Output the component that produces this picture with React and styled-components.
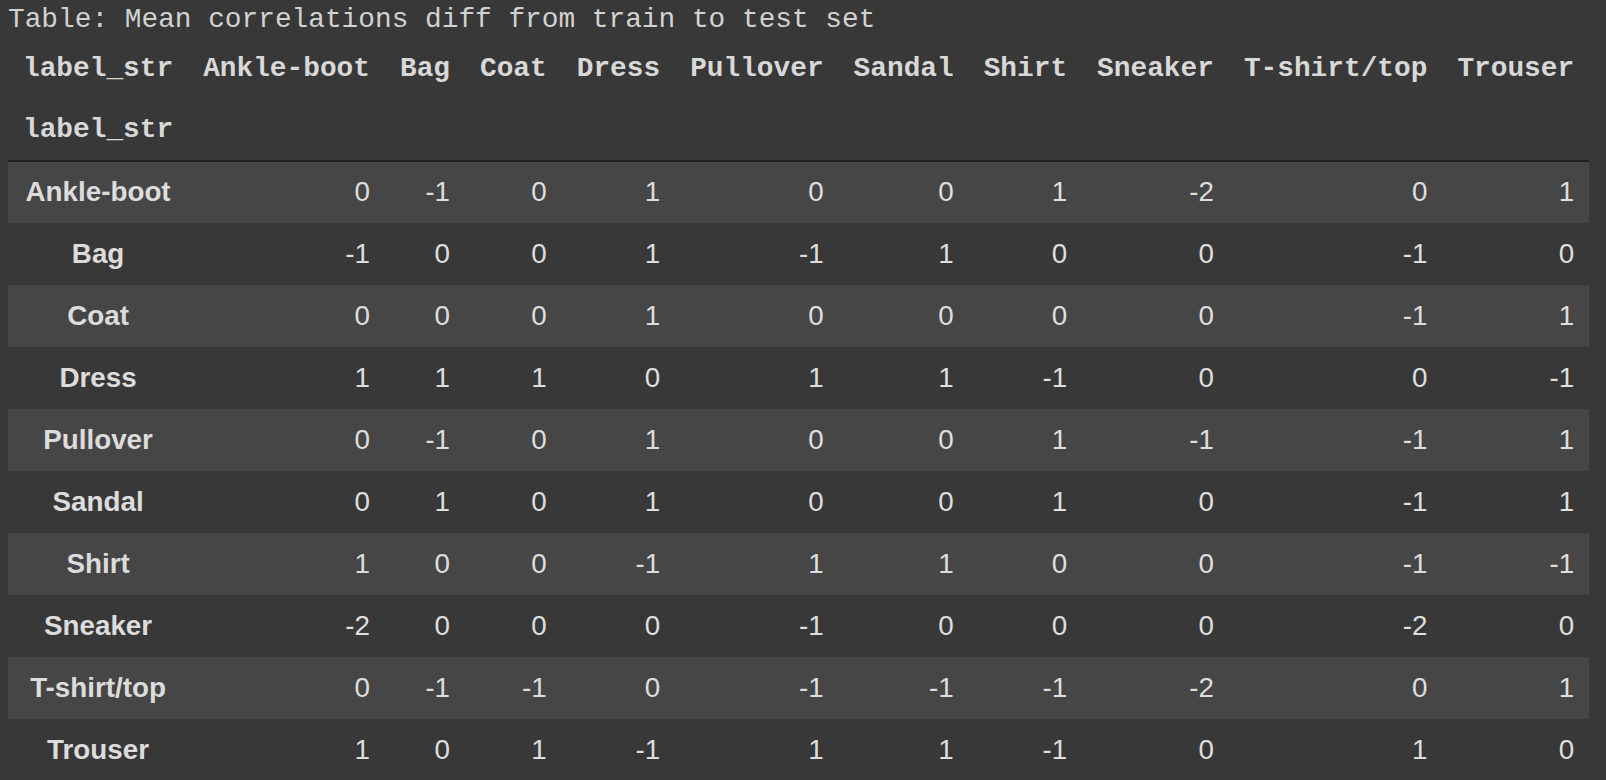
import * as React from 'react';
import styled, {createGlobalStyle} from 'styled-components';

const columns = ['Ankle-boot', 'Bag', 'Coat', 'Dress', 'Pullover', 'Sandal', 'Shirt', 'Sneaker', 'T-shirt/top', 'Trouser'];

const rows = [
    ['Ankle-boot', [0, -1, 0, 1, 0, 0, 1, -2, 0, 1]],
    ['Bag', [-1, 0, 0, 1, -1, 1, 0, 0, -1, 0]],
    ['Coat', [0, 0, 0, 1, 0, 0, 0, 0, -1, 1]],
    ['Dress', [1, 1, 1, 0, 1, 1, -1, 0, 0, -1]],
    ['Pullover', [0, -1, 0, 1, 0, 0, 1, -1, -1, 1]],
    ['Sandal', [0, 1, 0, 1, 0, 0, 1, 0, -1, 1]],
    ['Shirt', [1, 0, 0, -1, 1, 1, 0, 0, -1, -1]],
    ['Sneaker', [-2, 0, 0, 0, -1, 0, 0, 0, -2, 0]],
    ['T-shirt/top', [0, -1, -1, 0, -1, -1, -1, -2, 0, 1]],
    ['Trouser', [1, 0, 1, -1, 1, 1, -1, 0, 1, 0]]
];

export default function App() {
    return (
        <>
            <GlobalStyle/>
            <Page>
                <Caption>Table: Mean correlations diff from train to test set</Caption>
                <Frame>
                    <thead>
                        <HeadRow>
                            <HeadCell>label_str</HeadCell>
                            {columns.map(c => <HeadCell key={c}>{c}</HeadCell>)}
                        </HeadRow>
                        <HeadRow>
                            <HeadCell>label_str</HeadCell>
                            {columns.map(c => <HeadCell key={c}/>)}
                        </HeadRow>
                    </thead>
                    <tbody>
                        {rows.map(([label, values], i) => (
                            <BodyRow key={label} $striped={i % 2 === 0}>
                                <RowLabel>{label}</RowLabel>
                                {values.map((v, j) => <Cell key={j}>{v}</Cell>)}
                            </BodyRow>
                        ))}
                    </tbody>
                </Frame>
            </Page>
        </>
    );
}

const GlobalStyle = createGlobalStyle`
    html, body {
        margin: 0;
        padding: 0;
        background: #383838;
        overflow: hidden;
    }
`;

const Page = styled.div`
    padding: 0 8px;
    color: #d6d6d6;
`;

const Caption = styled.div`
    font-family: "Liberation Mono", "Courier New", monospace;
    font-size: 27.8px;
    line-height: 36px;
    padding-top: 2px;
    color: #d2d2d2;
    white-space: nowrap;
`;

const Frame = styled.table`
    border-collapse: collapse;
    border-spacing: 0;
    white-space: nowrap;

    thead {
        border-bottom: 2px solid #222222;
    }
`;

const HeadRow = styled.tr`
    height: 61.3px;
`;

const HeadCell = styled.th`
    font-family: "Liberation Mono", "Courier New", monospace;
    font-weight: bold;
    font-size: 27.8px;
    color: #d8d8d8;
    padding: 0 15px;
    text-align: right;
    vertical-align: middle;

    &:first-child {
        text-align: center;
    }
`;

const BodyRow = styled.tr`
    height: 62px;
    background: ${props => props.$striped ? '#464646' : 'transparent'};
`;

const RowLabel = styled.th`
    font-family: "Liberation Sans", Arial, sans-serif;
    font-weight: bold;
    font-size: 27.8px;
    color: #dcdcdc;
    padding: 0 15px;
    text-align: center;
    vertical-align: middle;
`;

const Cell = styled.td`
    font-family: "Liberation Sans", Arial, sans-serif;
    font-size: 27.8px;
    color: #dedede;
    padding: 0 15px;
    text-align: right;
    vertical-align: middle;
`;
